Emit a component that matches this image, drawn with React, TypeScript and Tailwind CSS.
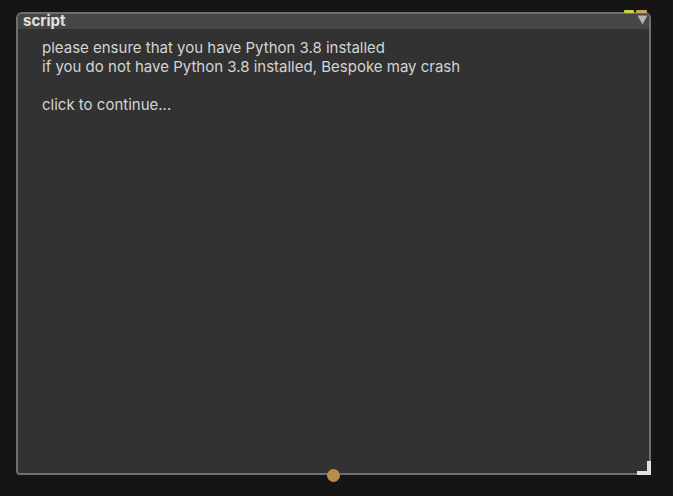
import React from 'react';

const App: React.FC = () => {
    return (
        <div className="w-[673px] h-[496px] bg-[#151515] pt-[12px] pl-[16px] overflow-hidden" style={{ fontFamily: 'Inter, "Noto Sans", sans-serif' }}>
            <div className="relative w-[635px] h-[463px] rounded-t-[6px] rounded-b-[4px] border-2 border-[#6f6f6f] bg-[#323232] flex flex-col">
                {/* title bar */}
                <div className="h-[15px] bg-[#464646] rounded-t-[4px] flex items-center pl-[5px] pr-[4px] pb-[2px]">
                    <span className="text-[15px] font-bold text-[#e2e2e2] leading-none">script</span>
                </div>
                {/* body */}
                <div className="flex-1 pl-[24px] pt-[9px] text-[15px] leading-[19px] text-[#d4d4d4]">
                    <p>please ensure that you have Python 3.8 installed</p>
                    <p>if you do not have Python 3.8 installed, Bespoke may crash</p>
                    <p className="mt-[19px]">click to continue...</p>
                </div>

                {/* top-right pins */}
                <div className="absolute -top-[4px] right-[2px] flex gap-[2px]">
                    <div className="w-[10px] h-[3px] rounded-[1px] bg-[#cfd03e]" />
                    <div className="w-[11px] h-[3px] rounded-[1px] bg-[#d3a054]" />
                </div>
                <svg className="absolute top-[1px] right-[1px]" width="11" height="10" viewBox="0 0 11 10">
                    <polygon points="0.5,0.5 10.5,0.5 5.5,9.5" fill="#b4b4b4" />
                </svg>

                {/* resize corner */}
                <div className="absolute -bottom-[2px] -right-[2px] w-[14px] h-[14px] border-r-[4px] border-b-[4px] border-[#e2e2e2]" />

                {/* output dot */}
                <div className="absolute -bottom-[9px] left-[309px] w-[13px] h-[13px] rounded-full bg-[#b98c4a]" />
            </div>
        </div>
    );
};

export default App;
